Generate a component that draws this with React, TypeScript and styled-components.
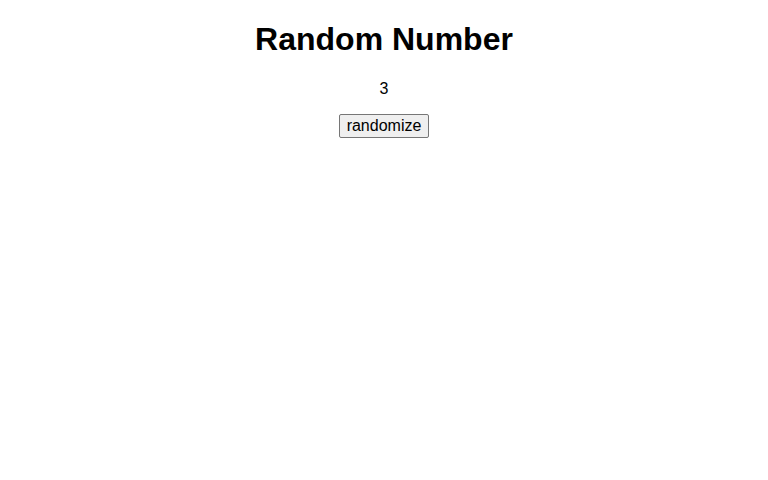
import React, { useState } from "react";
import styled, { createGlobalStyle } from "styled-components";

const GlobalStyle = createGlobalStyle`
  body {
    margin: 0;
    background: #ffffff;
    color: #000000;
    font-family: "Liberation Sans", Arial, sans-serif;
  }
`;

const Page = styled.div`
  padding: 0 8px;
  text-align: center;
  overflow: hidden;
`;

const Title = styled.h1`
  font-size: 32px;
  font-weight: bold;
  margin: 21.44px 0;
`;

const Value = styled.p`
  font-size: 16px;
  margin: 16px 0;
`;

const Button = styled.button`
  font-family: "Liberation Sans", Arial, sans-serif;
  font-size: 16px;
  color: #000000;
  background: #efefef;
  border: 1px solid #767676;
  border-radius: 2px;
  padding: 2px 7px;
  line-height: normal;
  cursor: pointer;
  &:hover {
    background: #e5e5e5;
  }
`;

export default function App() {
  const [value, setValue] = useState(3);
  return (
    <Page>
      <GlobalStyle />
      <Title>Random Number</Title>
      <Value>{value}</Value>
      <Button onClick={() => setValue(Math.floor(Math.random() * 10))}>
        randomize
      </Button>
    </Page>
  );
}
